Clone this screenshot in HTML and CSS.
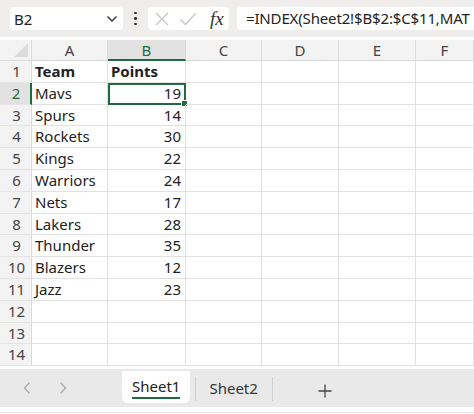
FILE: index.html
```html
<!DOCTYPE html>
<html lang="en">
<head>
  <meta charset="UTF-8">
  <link rel="stylesheet" href="styles.css">
</head>
<body>

<div class="topbar">
  <div class="namebox">
    <span>B2</span>
    <svg width="12" height="8" viewBox="0 0 12 8"><path d="M1.5 1.5 L6 6 L10.5 1.5" fill="none" stroke="#333" stroke-width="1.4"/></svg>
  </div>
  <div class="dots"><i></i><i></i><i></i></div>
  <div class="fnbox">
    <svg width="16" height="16" viewBox="0 0 16 16"><path d="M2 2 L14 14 M14 2 L2 14" stroke="#c4c4c4" stroke-width="1.3"/></svg>
    <svg width="18" height="16" viewBox="0 0 18 16"><path d="M1.5 8.5 L6.5 13.5 L16.5 2.5" fill="none" stroke="#c4c4c4" stroke-width="1.3"/></svg>
    <span class="fx">fx</span>
  </div>
  <div class="formula">=INDEX(Sheet2!$B$2:$C$11,MAT</div>
</div>

<div class="grid">
  <div class="corner"></div>
  <div class="colhead">A</div>
  <div class="colhead sel">B</div>
  <div class="colhead">C</div>
  <div class="colhead">D</div>
  <div class="colhead">E</div>
  <div class="colhead">F</div>

  <div class="rowhead">1</div><div class="cell bold">Team</div><div class="cell bold">Points</div><div class="cell"></div><div class="cell"></div><div class="cell"></div><div class="cell"></div>
  <div class="rowhead sel">2</div><div class="cell">Mavs</div><div class="cell num active">19<b class="handle"></b></div><div class="cell"></div><div class="cell"></div><div class="cell"></div><div class="cell"></div>
  <div class="rowhead">3</div><div class="cell">Spurs</div><div class="cell num">14</div><div class="cell"></div><div class="cell"></div><div class="cell"></div><div class="cell"></div>
  <div class="rowhead">4</div><div class="cell">Rockets</div><div class="cell num">30</div><div class="cell"></div><div class="cell"></div><div class="cell"></div><div class="cell"></div>
  <div class="rowhead">5</div><div class="cell">Kings</div><div class="cell num">22</div><div class="cell"></div><div class="cell"></div><div class="cell"></div><div class="cell"></div>
  <div class="rowhead">6</div><div class="cell">Warriors</div><div class="cell num">24</div><div class="cell"></div><div class="cell"></div><div class="cell"></div><div class="cell"></div>
  <div class="rowhead">7</div><div class="cell">Nets</div><div class="cell num">17</div><div class="cell"></div><div class="cell"></div><div class="cell"></div><div class="cell"></div>
  <div class="rowhead">8</div><div class="cell">Lakers</div><div class="cell num">28</div><div class="cell"></div><div class="cell"></div><div class="cell"></div><div class="cell"></div>
  <div class="rowhead">9</div><div class="cell">Thunder</div><div class="cell num">35</div><div class="cell"></div><div class="cell"></div><div class="cell"></div><div class="cell"></div>
  <div class="rowhead">10</div><div class="cell">Blazers</div><div class="cell num">12</div><div class="cell"></div><div class="cell"></div><div class="cell"></div><div class="cell"></div>
  <div class="rowhead">11</div><div class="cell">Jazz</div><div class="cell num">23</div><div class="cell"></div><div class="cell"></div><div class="cell"></div><div class="cell"></div>
  <div class="rowhead">12</div><div class="cell"></div><div class="cell"></div><div class="cell"></div><div class="cell"></div><div class="cell"></div><div class="cell"></div>
  <div class="rowhead">13</div><div class="cell"></div><div class="cell"></div><div class="cell"></div><div class="cell"></div><div class="cell"></div><div class="cell"></div>
  <div class="rowhead">14</div><div class="cell"></div><div class="cell"></div><div class="cell"></div><div class="cell"></div><div class="cell"></div><div class="cell"></div>
</div>

<div class="tabbar">
  <div class="nav">
    <svg width="10" height="14" viewBox="0 0 10 14"><path d="M7.5 1.5 L2.5 7 L7.5 12.5" fill="none" stroke="#a8a8a8" stroke-width="1.3"/></svg>
    <svg width="10" height="14" viewBox="0 0 10 14"><path d="M2.5 1.5 L7.5 7 L2.5 12.5" fill="none" stroke="#a8a8a8" stroke-width="1.3"/></svg>
  </div>
  <div class="tab active"><span>Sheet1</span></div>
  <div class="tab">Sheet2</div>
  <div class="plus">
    <svg width="14" height="14" viewBox="0 0 14 14"><path d="M7 0.5 V13.5 M0.5 7 H13.5" stroke="#444" stroke-width="1.3"/></svg>
  </div>
</div>
<div class="bottom"></div>

</body>
</html>
```

FILE: styles.css
```css
body { margin: 0; font-family: "Noto Sans", "Open Sans", sans-serif; background: #fff; color: #222; width: 474px; height: 414px; overflow: hidden; }

.topbar {
  height: 37px;
  background: #f0eded;
  display: flex;
  align-items: center;
  padding-left: 10px;
  white-space: nowrap;
  margin-bottom: 3px;
}
.namebox {
  width: 113px;
  height: 23px;
  background: #fff;
  border-radius: 4px;
  display: flex;
  align-items: center;
  justify-content: space-between;
  padding: 0 5px 0 4px;
  box-sizing: border-box;
  font-size: 15px;
}
.dots {
  width: 25px;
  display: flex;
  flex-direction: column;
  align-items: center;
  gap: 3px;
}
.dots i { width: 2.5px; height: 2.5px; background: #333; border-radius: 50%; display: block; }
.fnbox {
  width: 81px;
  height: 23px;
  background: #fff;
  border-radius: 4px;
  display: flex;
  align-items: center;
  padding-left: 6px;
  gap: 9px;
  box-sizing: border-box;
}
.fx { font-family: "Liberation Serif", serif; font-style: italic; font-size: 19px; color: #333; margin-left: 4px; }
.formula {
  margin-left: 8px;
  height: 23px;
  flex: 1;
  background: #fff;
  border-radius: 4px 0 0 4px;
  padding-left: 9px;
  font-size: 15px;
  letter-spacing: -0.15px;
  line-height: 23px;
  overflow: hidden;
  color: #222;
}

.grid {
  display: grid;
  grid-template-columns: 32px 76px 78px 76px 77px 77px 58px;
  grid-template-rows: 21px repeat(14, 21.8px);
  font-size: 15px;
}
.corner { background: #f3f3f3; border-right: 1px solid #dadada; border-bottom: 1px solid #dadada; position: relative; }
.corner::after {
  content: "";
  position: absolute;
  right: 3px; bottom: 3px;
  border-left: 14px solid transparent;
  border-bottom: 14px solid #dcdcdc;
}
.colhead {
  background: #f3f3f3;
  color: #444;
  text-align: center;
  line-height: 20px;
  border-right: 1px solid #dadada;
  border-bottom: 1px solid #dadada;
  font-size: 15px;
}
.colhead.sel { background: #e2e2e2; color: #1e6b41; border-bottom: 2px solid #1e6b41; line-height: 20px; }
.rowhead {
  background: #f3f3f3;
  color: #444;
  text-align: center;
  border-right: 1px solid #dadada;
  border-bottom: 1px solid #e4e4e4;
  line-height: 21px;
  font-size: 15px;
  padding-left: 2px;
}
.rowhead.sel { background: #e2e2e2; color: #1e6b41; border-right: 2px solid #1e6b41; }
.cell {
  border-right: 1px solid #e1e1e1;
  border-bottom: 1px solid #e1e1e1;
  padding: 0 3px;
  line-height: 21px;
  overflow: hidden;
  white-space: nowrap;
  position: relative;
}
.cell.bold { font-weight: 700; }
.cell.num { text-align: right; padding-right: 4px; }
.cell.active { outline: 2px solid #1e6b41; outline-offset: -2px; overflow: visible; }
.handle { position: absolute; right: -3px; bottom: -3px; width: 5px; height: 5px; background: #1e6b41; border: 1px solid #fff; }

.tabbar {
  margin-top: 3px;
  height: 38px;
  background: #e9e9e9;
  display: flex;
  align-items: flex-start;
}
.nav { width: 122px; display: flex; gap: 26px; padding: 12px 0 0 22px; box-sizing: border-box; }
.tab {
  height: 38px;
  font-size: 15px;
  line-height: 36px;
  padding: 0 15px;
  color: #333;
  border-right: 1px solid #cfcfcf;
  box-sizing: border-box;
}
.tab.active {
  background: #fff;
  border-radius: 0 0 6px 6px;
  margin-top: 2px;
  height: 32px;
  line-height: 30px;
  padding: 0 10px;
  border-right: none;
  margin-right: 5px;
}
.tab.active span { border-bottom: 2px solid #1e6b41; padding-bottom: 1px; color: #222; }
.tab:not(.active) { border-left: 1px solid #cfcfcf; height: 24px; line-height: 22px; margin-top: 8px; padding: 0 14px 0 13px; }
.plus { padding: 12px 0 0 45px; }
.bottom { height: 5px; border-bottom: 1px solid #e4e4e4; }
```
